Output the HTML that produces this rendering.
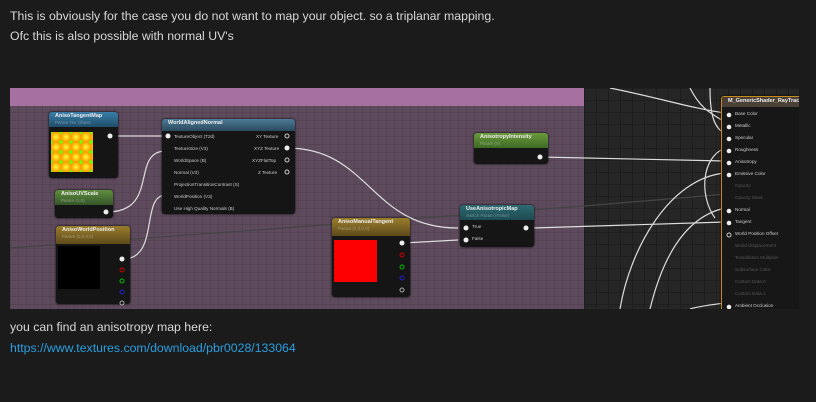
<!DOCTYPE html>
<html><head><meta charset="utf-8"><style>
body{margin:0;width:816px;height:402px;background:#1b1b1b;overflow:hidden;font-family:"Liberation Sans",sans-serif;position:relative}
.t{position:absolute;left:10px;color:#d8d8d8;font-size:12.3px;white-space:nowrap}
.a{color:#2a9fe0}
.n{position:absolute;background:#151515;border-radius:3px;box-shadow:0 0 2px #000}
.h{height:15px;border-radius:3px 3px 0 0;font-size:5.5px;color:#eee;font-weight:bold;padding:2px 0 0 6px;box-sizing:border-box;line-height:5px}
.h i{display:block;font-style:normal;font-weight:normal;color:rgba(255,255,255,.35);font-size:4.5px;margin-top:1px}
.l{position:absolute;font-size:4.6px;color:#ccc;white-space:nowrap}
.d{color:#555}
</style></head><body>
<div class="t" style="top:9px">This is obviously for the case you do not want to map your object. so a triplanar mapping.</div>
<div class="t" style="top:29px">Ofc this is also possible with normal UV's</div>
<div class="t" style="top:320px">you can find an anisotropy map here:</div>
<div class="t a" style="top:341px">https://www.textures.com/download/pbr0028/133064</div>

<div style="position:absolute;left:10px;top:88px;width:789px;height:221px;overflow:hidden;background:#262626">
<div style="position:absolute;left:0;top:0;width:574px;height:221px;background:#5d4a5c;background-image:linear-gradient(rgba(0,0,0,.08) 1px,transparent 1px),linear-gradient(90deg,rgba(0,0,0,.08) 1px,transparent 1px);background-size:8px 8px"></div>
<div style="position:absolute;left:0;top:0;width:574px;height:18px;background:#a671a0"></div>
<div style="position:absolute;left:574px;top:0;width:215px;height:221px;background-image:linear-gradient(#1e1e1e 1px,transparent 1px),linear-gradient(90deg,#1e1e1e 1px,transparent 1px);background-size:12px 12px"></div>
<svg width="789" height="221" style="position:absolute;left:0;top:0" fill="none" stroke="#ddd" stroke-width="1.2">
<path d="M0 160 L574 118 L789 100" stroke="#444"/>
<path d="M102 48 L156 48"/>
<path d="M97 124 C150 124 120 63 156 63"/>
<path d="M113 171 C150 171 130 107 156 107"/>
<path d="M277 60 C360 60 360 140 448 140"/>
<path d="M393 155 L448 152"/>
<path d="M530 69 L715 73"/>
<path d="M523 140 L715 134"/>
<path d="M600 0 C650 10 680 20 715 25 M680 0 C690 20 700 25 715 34 M700 0 C700 30 705 40 715 46 M715 60 C690 70 690 110 705 130 M715 85 C660 90 620 160 610 221 M715 120 C670 130 650 180 640 221 M715 215 C700 217 690 218 680 221"/>
</svg>
<div class="n" style="left:39px;top:24px;width:69px;height:66px"><div class="h" style="background:linear-gradient(#3a7ea8,#1f4d6a)">AnisoTangentMap<i>Param Tex Object</i></div>
<div style="position:absolute;left:2px;top:20px;width:42px;height:40px;background:repeating-radial-gradient(circle at 5px 5px,#ff3 0,#ff9a00 5px,#6f0 6px,#ff3 9px);background-size:10px 10px"></div></div>
<div class="n" style="left:152px;top:31px;width:133px;height:95px"><div class="h" style="background:linear-gradient(#4d7a95,#2a4a5e);height:12px">WorldAlignedNormal</div>
<span class="l" style="left:12px;top:15px">TextureObject (T2d)</span><span class="l" style="left:12px;top:27px">TextureSize (V3)</span><span class="l" style="left:12px;top:39px">WorldSpace (B)</span><span class="l" style="left:12px;top:51px">Normal (V3)</span><span class="l" style="left:12px;top:63px">ProjectionTransitionContrast (S)</span><span class="l" style="left:12px;top:75px">WorldPosition (V3)</span><span class="l" style="left:12px;top:87px">Use High Quality Normals (B)</span>
<span class="l" style="left:94px;top:15px">XY Texture</span><span class="l" style="left:92px;top:27px">XYZ Texture</span><span class="l" style="left:90px;top:39px">XYZFlatTop</span><span class="l" style="left:96px;top:51px">Z Texture</span></div>
<div class="n" style="left:45px;top:102px;width:58px;height:28px"><div class="h" style="background:linear-gradient(#5f8e3e,#35552a)">AnisoUVScale<i>Param (1.0)</i></div></div>
<div class="n" style="left:46px;top:138px;width:74px;height:78px"><div class="h" style="background:linear-gradient(#9a7d2c,#5e4a1c);height:18px">AnisoWorldPosition<i>Param (0,0,0,0)</i></div>
<div style="position:absolute;left:2px;top:20px;width:42px;height:43px;background:#000"></div></div>
<div class="n" style="left:464px;top:45px;width:74px;height:31px"><div class="h" style="background:linear-gradient(#6a9a3c,#3e6a26)">AnisotropyIntensity<i>Param (0)</i></div></div>
<div class="n" style="left:450px;top:117px;width:74px;height:42px"><div class="h" style="background:linear-gradient(#2d6a72,#1d4a50)">UseAnisotropicMap<i>Switch Param (False)</i></div>
<span class="l" style="left:12px;top:19px">True</span><span class="l" style="left:12px;top:31px">False</span></div>
<div class="n" style="left:322px;top:130px;width:78px;height:79px"><div class="h" style="background:linear-gradient(#9a7d2c,#5e4a1c);height:18px">AnisoManualTangent<i>Param (1,0,0,0)</i></div>
<div style="position:absolute;left:2px;top:22px;width:43px;height:42px;background:#f00"></div></div>
<div class="n" style="left:711px;top:8px;width:80px;height:215px;border:1px solid #c88a1c;background:#171717"><div class="h" style="background:#4a4036;height:10px;padding-top:2px">M_GenericShader_RayTrac</div>
<span class="l" style="left:13px;top:14px">Base Color</span><span class="l" style="left:13px;top:26px">Metallic</span><span class="l" style="left:13px;top:38px">Specular</span><span class="l" style="left:13px;top:50px">Roughness</span><span class="l" style="left:13px;top:62px">Anisotropy</span><span class="l" style="left:13px;top:74px">Emissive Color</span><span class="l d" style="left:13px;top:86px">Opacity</span><span class="l d" style="left:13px;top:98px">Opacity Mask</span><span class="l" style="left:13px;top:110px">Normal</span><span class="l" style="left:13px;top:122px">Tangent</span><span class="l" style="left:13px;top:134px">World Position Offset</span><span class="l d" style="left:13px;top:146px">World Displacement</span><span class="l d" style="left:13px;top:158px">Tessellation Multiplier</span><span class="l d" style="left:13px;top:170px">Subsurface Color</span><span class="l d" style="left:13px;top:182px">Custom Data 0</span><span class="l d" style="left:13px;top:194px">Custom Data 1</span><span class="l" style="left:13px;top:206px">Ambient Occlusion</span></div>
<svg width="789" height="221" style="position:absolute;left:0;top:0">
<g fill="#eee"><circle cx="100" cy="48" r="2.5"/><circle cx="158" cy="48" r="2.5"/><circle cx="96" cy="124" r="2.5"/><circle cx="112" cy="171" r="2.5"/><circle cx="277" cy="60" r="2.5"/><circle cx="530" cy="69" r="2.5"/><circle cx="456" cy="140" r="2.5"/><circle cx="456" cy="152" r="2.5"/><circle cx="516" cy="140" r="2.5"/><circle cx="392" cy="155" r="2.5"/>
<circle cx="719" cy="27" r="2.3"/><circle cx="719" cy="39" r="2.3"/><circle cx="719" cy="51" r="2.3"/><circle cx="719" cy="63" r="2.3"/><circle cx="719" cy="75" r="2.3"/><circle cx="719" cy="87" r="2.3"/><circle cx="719" cy="123" r="2.3"/><circle cx="719" cy="135" r="2.3"/><circle cx="719" cy="219" r="2.3"/></g>
<g fill="none" stroke-width="1"><circle cx="112" cy="182" r="2" stroke="#c00"/><circle cx="112" cy="193" r="2" stroke="#0b0"/><circle cx="112" cy="204" r="2" stroke="#22c"/><circle cx="112" cy="215" r="2" stroke="#aaa"/>
<circle cx="392" cy="167" r="2" stroke="#c00"/><circle cx="392" cy="179" r="2" stroke="#0b0"/><circle cx="392" cy="190" r="2" stroke="#22c"/><circle cx="392" cy="202" r="2" stroke="#aaa"/>
<circle cx="277" cy="48" r="2" stroke="#ccc"/><circle cx="277" cy="72" r="2" stroke="#ccc"/><circle cx="277" cy="84" r="2" stroke="#ccc"/><circle cx="719" cy="147" r="2" stroke="#ccc"/></g>
</svg>
</div>
</body></html>
